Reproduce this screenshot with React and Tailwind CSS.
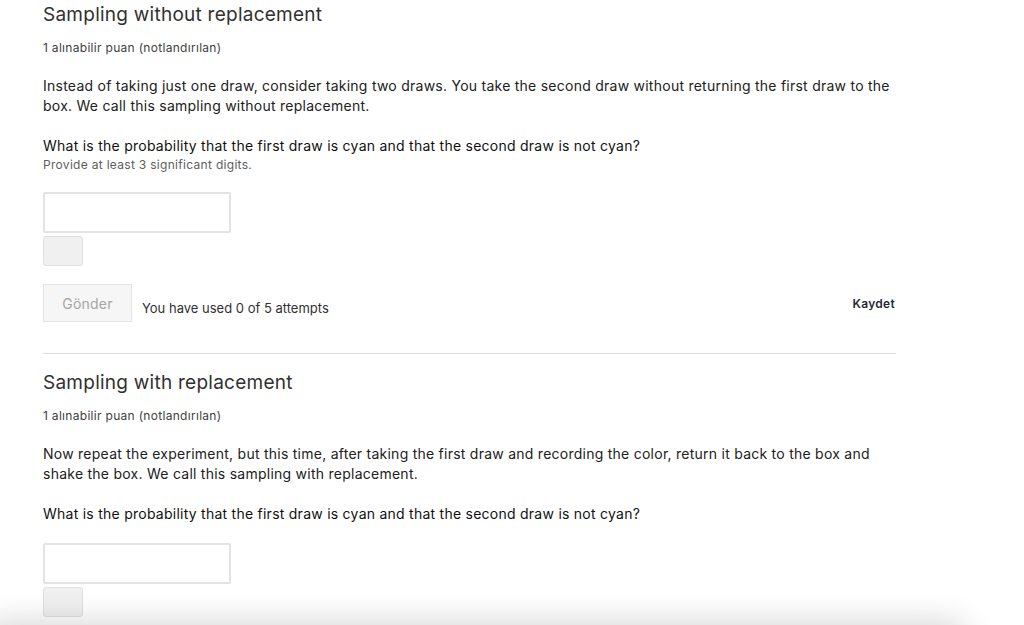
import React from 'react';

const Problem = ({ title, body, question, hint, showActions }) => {
  return (
    <div>
      <h3 className="text-[19px] leading-[24px] text-[#313131] font-normal tracking-[0.25px]">{title}</h3>
      <div className="mt-[13px] text-[12px] leading-[16px] text-[#414141] tracking-[0.3px]">1 alınabilir puan (notlandırılan)</div>

      <p className="mt-[20px] text-[14px] leading-[20px] text-[#212121] tracking-[0.25px] pr-[4px]">{body}</p>

      <p className="mt-[20px] text-[14px] leading-[20px] text-[#111111] tracking-[0.25px]">{question}</p>
      {hint && <div className="text-[12px] leading-[17px] text-[#5e5e5e] tracking-[0.3px]">{hint}</div>}

      <div className={hint ? 'mt-[19px]' : 'mt-[19px]'}>
        <input
          type="text"
          className="block w-[188px] h-[41px] border-2 border-[#e3e3e3] rounded-[2px] bg-white outline-none"
        />
        <div className="mt-[3px] w-[40px] h-[30px] rounded-[3px] border border-[#e0e0e0] bg-[#f0f0f0]" />
      </div>

      {showActions && (
        <div className="mt-[18px] flex items-start justify-between">
          <div className="flex items-end gap-[10px]">
            <button className="w-[89px] h-[38px] border border-[#e4e4e4] bg-[#f6f6f6] text-[14px] text-[#a6a6a6] tracking-[0.25px]">
              Gönder
            </button>
            <span className="text-[13px] leading-[16px] text-[#313131] mb-[6px]">You have used 0 of 5 attempts</span>
          </div>
          <button className="mt-[11px] text-[12px] font-semibold text-[#1f2a33] tracking-[0.3px] pr-[1px]">Kaydet</button>
        </div>
      )}
    </div>
  );
};

const App = () => {
  return (
    <div
      className="relative h-[625px] overflow-hidden bg-white"
      style={{ fontFamily: 'Inter, "Noto Sans", sans-serif' }}
    >
      <div className="pl-[43px] w-[896px] pt-[3px]">
        <Problem
          title="Sampling without replacement"
          body="Instead of taking just one draw, consider taking two draws. You take the second draw without returning the first draw to the box. We call this sampling without replacement."
          question="What is the probability that the first draw is cyan and that the second draw is not cyan?"
          hint="Provide at least 3 significant digits."
          showActions
        />

        <div className="mt-[31px] border-t border-[#dddddd]" />

        <div className="pt-[17px]">
          <Problem
            title="Sampling with replacement"
            body="Now repeat the experiment, but this time, after taking the first draw and recording the color, return it back to the box and shake the box. We call this sampling with replacement."
            question="What is the probability that the first draw is cyan and that the second draw is not cyan?"
          />
        </div>
      </div>

      {/* footer shadow peeking in from below */}
      <div className="absolute left-[-20px] bottom-[-50px] w-[990px] h-[50px] rounded-[40px] bg-white shadow-[0_-6px_30px_rgba(0,0,0,0.14)]" />
    </div>
  );
};

export default App;
